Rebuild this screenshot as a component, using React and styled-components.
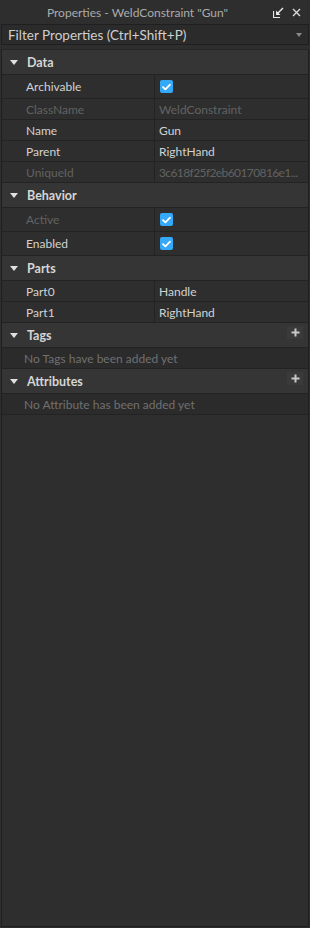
import React from "react";
import styled, { createGlobalStyle } from "styled-components";

const Global = createGlobalStyle`
  html, body { margin: 0; padding: 0; background: #2e2e2e; }
  body { font-family: Lato, "Noto Sans", sans-serif; }
  * { box-sizing: border-box; }
`;

const Window = styled.div`
  width: 310px;
  height: 928px;
  background: #2e2e2e;
  display: flex;
  flex-direction: column;
  overflow: hidden;
`;

const TitleBar = styled.div`
  height: 24px;
  display: flex;
  align-items: center;
  padding-right: 9px;
`;

const Title = styled.div`
  flex: 1;
  text-align: center;
  font-size: 12px;
  color: #ababab;
  padding-left: 2px;
`;

const TitleIcons = styled.div`
  display: flex;
  align-items: center;
  gap: 8px;
`;

const FilterBar = styled.div`
  margin: 0 1px;
  height: 21px;
  border: 1px solid #1f1f1f;
  background: #2b2b2b;
  display: flex;
  align-items: center;
  padding: 0 6px;
  font-size: 13.5px;
  color: #cfcfcf;
`;

const FilterText = styled.span`
  flex: 1;
`;

const Caret = styled.span`
  width: 0;
  height: 0;
  border-left: 3.5px solid transparent;
  border-right: 3.5px solid transparent;
  border-top: 4px solid #8a8a8a;
`;

const Panel = styled.div`
  flex: 1;
  margin: 4px 1px 1px;
  border: 1px solid #1f1f1f;
  border-top-color: #262626;
  background: #2e2e2e;
  display: flex;
  flex-direction: column;
`;

const Header = styled.div`
  height: 25px;
  display: flex;
  align-items: center;
  background: #353535;
  border-bottom: 1px solid #232323;
  font-weight: 700;
  font-size: 12.5px;
  color: #d6d6d6;
  padding-right: 5px;
`;

const HeaderArrow = styled.span`
  width: 0;
  height: 0;
  border-left: 4px solid transparent;
  border-right: 4px solid transparent;
  border-top: 5px solid #e0e0e0;
  margin: 0 9px 0 8px;
`;

const HeaderLabel = styled.span`
  flex: 1;
`;

const AddButton = styled.span`
  width: 16px;
  height: 13px;
  background: #3a3a3a;
  display: flex;
  align-items: center;
  justify-content: center;
  align-self: flex-start;
  margin-top: 3px;
`;

const Row = styled.div`
  height: ${(p) => p.$h}px;
  display: grid;
  grid-template-columns: 153px 1fr;
  border-bottom: 1px solid #232323;
  font-size: 12px;
`;

const NameCell = styled.div`
  display: flex;
  align-items: center;
  padding-left: 24px;
  border-right: 1px solid #232323;
  color: ${(p) => (p.$disabled ? "#626262" : "#d2d2d2")};
`;

const ValueCell = styled.div`
  display: flex;
  align-items: center;
  padding-left: 4px;
  min-width: 0;
  white-space: nowrap;
  letter-spacing: ${(p) => (p.$tight ? "-0.6px" : "normal")};
  color: ${(p) => (p.$disabled ? "#626262" : "#d2d2d2")};
`;

const Box = styled.span`
  width: 13px;
  height: 13px;
  border-radius: 2px;
  background: #35a9f7;
  display: flex;
  align-items: center;
  justify-content: center;
  margin-left: 1px;
`;

const Message = styled.div`
  height: 21px;
  display: flex;
  align-items: center;
  padding-left: 22px;
  background: #2b2b2b;
  border-bottom: 1px solid #232323;
  font-size: 12px;
  color: #707070;
`;

const Check = () => (
  <Box>
    <svg width="9" height="8" viewBox="0 0 9 8">
      <path d="M1 4.2 L3.4 6.4 L8 1.6" stroke="#fff" strokeWidth="1.8" fill="none" strokeLinecap="round" strokeLinejoin="round" />
    </svg>
  </Box>
);

const Plus = () => (
  <svg width="9" height="9" viewBox="0 0 9 9">
    <path d="M4.5 0.5 V8.5 M0.5 4.5 H8.5" stroke="#c8c8c8" strokeWidth="2" />
  </svg>
);

const Section = ({ label, add }) => (
  <Header>
    <HeaderArrow />
    <HeaderLabel>{label}</HeaderLabel>
    {add && (
      <AddButton>
        <Plus />
      </AddButton>
    )}
  </Header>
);

const Prop = ({ name, value, check, disabled, tight }) => (
  <Row $h={check ? 24 : 21}>
    <NameCell $disabled={disabled}>{name}</NameCell>
    <ValueCell $disabled={disabled} $tight={tight}>
      {check ? <Check /> : value}
    </ValueCell>
  </Row>
);

export default function App() {
  return (
    <Window>
      <Global />
      <TitleBar>
        <Title>Properties - WeldConstraint "Gun"</Title>
        <TitleIcons>
          <svg width="11" height="11" viewBox="0 0 11 11">
            <path d="M0.5 4 V10.5 H7" stroke="#e6e6e6" strokeWidth="1.2" fill="none" />
            <path d="M10 1 L4.5 6.5" stroke="#e6e6e6" strokeWidth="1.4" />
            <path d="M3 3.5 V8 H7.5 Z" fill="#e6e6e6" />
          </svg>
          <svg width="9" height="9" viewBox="0 0 9 9">
            <path d="M1 1 L8 8 M8 1 L1 8" stroke="#d8d8d8" strokeWidth="1.4" />
          </svg>
        </TitleIcons>
      </TitleBar>
      <FilterBar>
        <FilterText>Filter Properties (Ctrl+Shift+P)</FilterText>
        <Caret />
      </FilterBar>
      <Panel>
        <Section label="Data" />
        <Prop name="Archivable" check />
        <Prop name="ClassName" value="WeldConstraint" disabled />
        <Prop name="Name" value="Gun" />
        <Prop name="Parent" value="RightHand" />
        <Prop name="UniqueId" value="3c618f25f2eb60170816e1..." disabled tight />
        <Section label="Behavior" />
        <Prop name="Active" check disabled />
        <Prop name="Enabled" check />
        <Section label="Parts" />
        <Prop name="Part0" value="Handle" />
        <Prop name="Part1" value="RightHand" />
        <Section label="Tags" add />
        <Message>No Tags have been added yet</Message>
        <Section label="Attributes" add />
        <Message>No Attribute has been added yet</Message>
      </Panel>
    </Window>
  );
}
